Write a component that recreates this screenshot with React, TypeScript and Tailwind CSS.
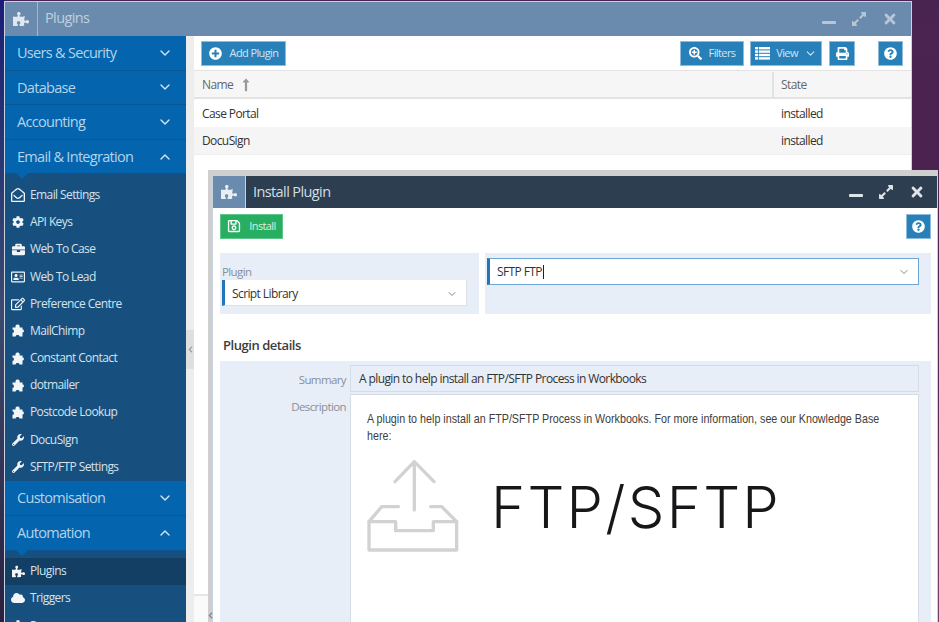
import React from "react";
import {
  FaPuzzlePiece, FaPlusCircle, FaSearchPlus, FaPrint, FaQuestionCircle, FaRegSave,
  FaRegEnvelopeOpen, FaCog, FaBriefcase, FaRegAddressCard, FaRegEdit, FaWrench, FaCloud,
  FaExpandAlt, FaTimes, FaLongArrowAltUp, FaChevronLeft,
} from "react-icons/fa";
import { LuChevronDown, LuChevronUp } from "react-icons/lu";

function Group({ label, open }: { label: string; open?: boolean }) {
  return (
    <div className="relative flex h-[34.6px] items-center justify-between border-b border-[#0b5590] bg-[#0465ae] pl-3 pr-[13px] text-[14.5px] tracking-[-0.7px] text-[#b5d3ea]">
      <span>{label}</span>
      {open ? <LuChevronUp size={16} strokeWidth={2} className="text-[#d7e7f3]" /> : <LuChevronDown size={16} strokeWidth={2} className="text-[#d7e7f3]" />}
      {open && <div className="absolute left-[11px] top-full z-10 h-0 w-0 border-x-[6px] border-t-[6px] border-x-transparent border-t-[#0465ae]" />}
    </div>
  );
}

function Item({ icon, label, active }: { icon: React.ReactNode; label: string; active?: boolean }) {
  return (
    <div className={`flex h-[27.2px] items-center text-[12px] text-[#d5e2ec] ${active ? "bg-[#133f64]" : ""}`}>
      <span className="flex w-[25px] justify-center pl-[1px] text-[#f2f6f9]">{icon}</span>
      <span>{label}</span>
    </div>
  );
}

function Btn({ className, children }: { className: string; children: React.ReactNode }) {
  return (
    <div className={`flex h-[25px] items-center justify-center border border-[#8fbcdc] bg-[#2880b9] text-[11px] text-[#d3e4f0] ${className}`}>
      {children}
    </div>
  );
}

function WinControls({ className }: { className: string }) {
  return (
    <div className={`flex items-center gap-[15px] ${className}`}>
      <span className="mt-[8px] h-[3px] w-[14px] rounded-[1px] bg-current" />
      <FaExpandAlt size={16} />
      <FaTimes size={16} />
    </div>
  );
}

function ListIcon() {
  return (
    <svg width="15" height="13" viewBox="0 0 15 13" fill="#fff">
      <rect x="0" y="0" width="15" height="2.4" />
      <rect x="0" y="3.4" width="15" height="2.4" />
      <rect x="0" y="6.8" width="15" height="2.4" />
      <rect x="0" y="10.2" width="15" height="2.4" />
      <rect x="3" y="0" width="0.8" height="13" fill="#2880b9" />
    </svg>
  );
}

function Piece() {
  return (
    <svg width="12" height="13" viewBox="0 0 12 13" fill="currentColor">
      <path d="M0.5 3.5H3.6C3 1.2 4.6 0.5 5.6 0.5S8.2 1.2 7.6 3.5H10.5V5.6C12.4 5.2 12.4 8.8 10.5 8.4V12.5H7.4C8 10.4 3.2 10.4 3.8 12.5H0.5V8.8C2.4 9.4 2.4 5 0.5 5.6Z" />
    </svg>
  );
}

export default function App() {
  return (
    <div
      className="relative h-[622px] w-[939px] overflow-hidden bg-gradient-to-b from-[#4a2450] via-[#4e2050] to-[#7a3f6e] tracking-[-0.6px]"
      style={{ fontFamily: '"Open Sans", "Noto Sans", sans-serif' }}
    >
      <div className="absolute inset-y-0 left-0 w-[5px] bg-gradient-to-b from-[#1c1c78] via-[#3a4a70] to-[#2a2040]" />

      {/* Back window */}
      <div className="absolute left-[4px] top-[1px] flex h-[640px] w-[908px] flex-col border border-[#c9d3df] bg-white">
        <div className="flex h-[34px] items-center bg-[#6b8bae] text-[#bfd0e0]">
          <div className="flex h-full w-[33px] items-center justify-center border-r border-[#a4b8cd]">
            <FaPuzzlePiece size={16} className="text-[#dfe7ef]" />
          </div>
          <span className="ml-[7px] -mt-[2px] flex-1 text-[14.5px]">Plugins</span>
          <WinControls className="-mt-[1px] mr-[13px] text-[#b6c6d8]" />
        </div>
        <div className="flex flex-1">
          <div className="w-[181px] bg-[#17507f]">
            <Group label="Users &amp; Security" />
            <Group label="Database" />
            <Group label="Accounting" />
            <Group label="Email &amp; Integration" open />
            <div className="pt-[7px] pb-[1px]">
              <Item icon={<FaRegEnvelopeOpen size={14} />} label="Email Settings" />
              <Item icon={<FaCog size={12} />} label="API Keys" />
              <Item icon={<FaBriefcase size={13} />} label="Web To Case" />
              <Item icon={<FaRegAddressCard size={14} />} label="Web To Lead" />
              <Item icon={<FaRegEdit size={14} />} label="Preference Centre" />
              <Item icon={<Piece />} label="MailChimp" />
              <Item icon={<Piece />} label="Constant Contact" />
              <Item icon={<Piece />} label="dotmailer" />
              <Item icon={<Piece />} label="Postcode Lookup" />
              <Item icon={<FaWrench size={12} />} label="DocuSign" />
              <Item icon={<FaWrench size={12} />} label="SFTP/FTP Settings" />
            </div>
            <Group label="Customisation" />
            <Group label="Automation" open />
            <div className="pt-[7px]">
              <Item icon={<FaPuzzlePiece size={13} />} label="Plugins" active />
              <Item icon={<FaCloud size={14} />} label="Triggers" />
              <Item icon={<FaCog size={12} />} label="Processes" />
            </div>
          </div>
          <div className="relative w-[8px] bg-[#ededed]">
            <div className="absolute left-0 top-[294px] flex h-[39px] w-[8px] items-center justify-center bg-[#dfdfdf] text-[#9a9a9a]">
              <FaChevronLeft size={7} />
            </div>
          </div>
          <div className="flex-1">
            <div className="flex h-[34px] items-center pl-[7px] pr-[8px]">
              <Btn className="w-[85px] gap-[8px]"><FaPlusCircle size={13} className="text-white" />Add Plugin</Btn>
              <div className="flex-1" />
              <Btn className="w-[64px] gap-[7px]"><FaSearchPlus size={13} className="text-white" />Filters</Btn>
              <Btn className="ml-[6px] w-[72px] gap-[6px]"><ListIcon />View<LuChevronDown size={13} /></Btn>
              <Btn className="ml-[7px] w-[26px]"><FaPrint size={13} className="text-white" /></Btn>
              <Btn className="ml-[23px] w-[25px]"><FaQuestionCircle size={13} className="text-white" /></Btn>
            </div>
            <div className="flex h-[29px] items-center border-y border-y-[#e3e3e3] border-b-2 bg-[#f6f6f6] pt-[1px] text-[12px] text-[#666]">
              <div className="flex h-full flex-1 items-center gap-[6px] pl-[8px]">Name <FaLongArrowAltUp size={14} className="text-[#999]" /></div>
              <div className="flex h-full w-[139px] items-center border-l-2 border-[#e3e3e3] pl-[7px]">State</div>
            </div>
            <div className="flex h-[28px] items-center pt-[1px] text-[12px] text-[#333]">
              <div className="flex-1 pl-[8px]">Case Portal</div>
              <div className="w-[139px] pl-[9px]">installed</div>
            </div>
            <div className="flex h-[28px] items-center border-b border-[#eee] bg-[#f5f5f5] pt-[1px] text-[12px] text-[#333]">
              <div className="flex-1 pl-[8px]">DocuSign</div>
              <div className="w-[139px] pl-[9px]">installed</div>
            </div>
          </div>
        </div>
      </div>

      {/* Pager stub of the back window */}
      <div className="absolute left-[194px] top-[594px] h-[28px] w-[14px] border-t-2 border-[#e6e6e6] bg-[#fafafa]" />

      {/* Front window */}
      <div className="absolute left-[208px] top-[170px] h-[470px] w-[730px] border-l-4 border-t-[5px] border-[#cfcfcf]">
        <div className="flex h-full flex-col border border-[#c9d3df] bg-white">
          <div className="flex h-[32px] shrink-0 items-center bg-[#2c3e50] text-[#d5dde5]">
            <div className="flex h-full w-[33px] items-center justify-center border-r border-[#c4d0dc] bg-[#6b8bae]">
              <FaPuzzlePiece size={16} className="text-[#e9eef3]" />
            </div>
            <span className="ml-[7px] -mt-[1px] flex-1 text-[14.5px]">Install Plugin</span>
            <WinControls className="-mt-[1px] mr-[12px] text-[#dfe4e9]" />
          </div>
          <div className="flex h-[36px] shrink-0 items-center justify-between pl-[7px] pr-[6px]">
            <div className="flex h-[25px] w-[63px] items-center justify-center gap-[8px] border border-[#5fc68b] bg-[#27ae60] text-[11px] text-[#d6f0e0]">
              <FaRegSave size={14} className="text-white" />Install
            </div>
            <Btn className="w-[25px]"><FaQuestionCircle size={13} className="text-white" /></Btn>
          </div>
          <div className="mt-[9px] flex shrink-0 gap-[6px] pl-[7px] pr-[6px]">
            <div className="h-[61px] w-[259px] bg-[#e7eef7] pl-[2px] pt-[11px]">
              <div className="h-[16px] text-[11.5px] leading-[15px] text-[#8a8f96]">Plugin</div>
              <div className="flex h-[26px] w-[245px] items-center justify-between border-l-[3px] border-r border-b border-l-[#2176b5] border-r-[#dde2e8] border-b-[#dde2e8] bg-white pl-[7px] pr-[8px] pt-[2px] text-[12px] text-[#333]">
                Script Library
                <LuChevronDown size={12} className="text-[#888]" />
              </div>
            </div>
            <div className="h-[61px] flex-1 bg-[#e7eef7] pl-[2px] pr-[12px] pt-[5px]">
              <div className="flex h-[27px] items-center justify-between border border-l-[3px] border-[#6ea5d2] border-l-[#2176b5] bg-white pl-[7px] pr-[8px] text-[12px] text-[#333]">
                <span className="flex items-center pt-[1px]">SFTP FTP<span className="ml-[1px] h-[14px] w-px bg-[#222]" /></span>
                <LuChevronDown size={12} className="text-[#888]" />
              </div>
            </div>
          </div>
          <div className="flex h-[47px] shrink-0 items-center pl-[10px] pt-[16px] text-[13px] font-semibold tracking-[-0.45px] text-[#3c3c3c]">Plugin details</div>
          <div className="ml-[7px] mr-[6px] flex-1 bg-[#e7eef7] pt-[4px]">
            <div className="flex">
              <div className="w-[130px] pr-[4px] pt-[6px] text-right text-[11.5px] text-[#8a8f96]">Summary</div>
              <div className="flex h-[27px] w-[569px] items-center border border-[#d5dce3] pl-[8px] pt-[1px] text-[12px] text-[#333]">
                A plugin to help install an FTP/SFTP Process in Workbooks
              </div>
            </div>
            <div className="mt-[2px] flex">
              <div className="w-[130px] pr-[4px] pt-[4px] text-right text-[11.5px] text-[#8a8f96]">Description</div>
              <div className="h-[300px] w-[569px] border border-b-0 border-[#d5dce3] bg-white px-[16px] pt-[16px]">
                <p className="w-[610px] origin-left scale-x-[0.88] text-[12.2px] leading-[17px] tracking-normal text-[#404040]" style={{ fontFamily: '"Liberation Sans", Arial, sans-serif' }}>
                  A plugin to help install an FTP/SFTP Process in Workbooks. For more information, see our Knowledge Base here:
                </p>
                <div className="mt-[12px] flex h-[100px] items-center">
                  <svg viewBox="480 300 285 280" width="95" height="93.3" className="-ml-[2px] shrink-0" fill="none" stroke="#d2d2d2" strokeWidth="10" strokeLinejoin="round" strokeLinecap="round">
                    <path d="M628 450V305M570 365L628 305L687 365" />
                    <path d="M580 440H530L492 485V570H755V485L710 440H677" />
                    <path d="M492 485H572V512H685V485H755" />
                  </svg>
                  <span className="ml-[31px] whitespace-nowrap text-[58px] font-light leading-none tracking-[2.3px] text-[#17171a]" style={{ fontFamily: "Inter, sans-serif" }}>FTP/SFTP</span>
                </div>
              </div>
            </div>
          </div>
        </div>
      </div>

      {/* Pager arrow showing at the front window's edge */}
      <div className="absolute left-[208px] top-[611px] flex h-[8px] w-[4px] items-center justify-center text-[#7d7d7d]">
        <FaChevronLeft size={7} className="shrink-0" />
      </div>
    </div>
  );
}
